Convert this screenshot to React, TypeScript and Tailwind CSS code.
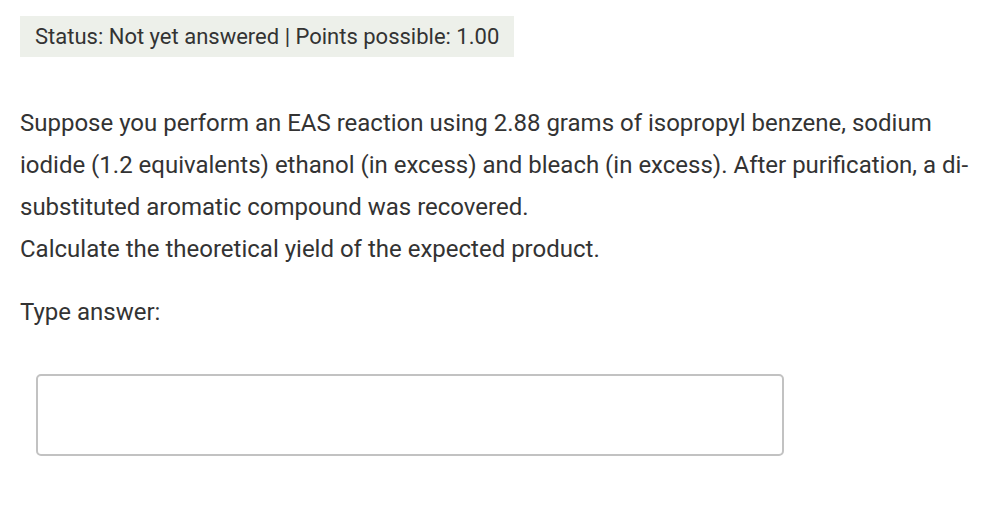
export default function App() {
  return (
    <div className="w-[998px] h-[520px] bg-white px-5 pt-4 text-[#333333]" style={{ fontFamily: "Roboto, 'Noto Sans', sans-serif" }}>
      <div className="inline-block bg-[#edf0ea] pl-[15px] pr-[15px] py-[9px] text-[22px] leading-[23px]">
        Status: Not yet answered | Points possible: 1.00
      </div>
      <div className="mt-[45px] text-[24px] leading-[42px] w-[960px]">
        <p>
          Suppose you perform an EAS reaction using 2.88 grams of isopropyl benzene, sodium iodide (1.2 equivalents) ethanol (in excess) and bleach (in excess). After purification, a di-substituted aromatic compound was recovered.
        </p>
        <p>Calculate the theoretical yield of the expected product.</p>
      </div>
      <div className="mt-[29px] text-[24px] leading-[26px]">Type answer:</div>
      <div className="mt-[49px] ml-4">
        <input type="text" className="block w-[748px] h-[82px] border-2 border-[#c2c2c2] rounded-[5px] bg-white outline-none" />
      </div>
    </div>
  );
}
